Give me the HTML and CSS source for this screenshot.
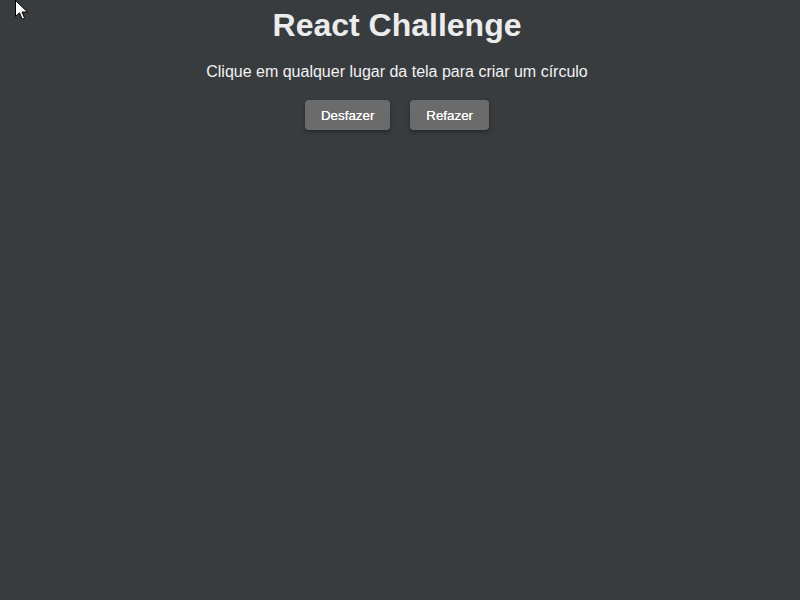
FILE: index.html
```html
<!DOCTYPE html>
<html lang="pt-BR">
<head>
<meta charset="utf-8">
<title>React Challenge</title>
<link rel="stylesheet" href="styles.css">
</head>
<body>
<main class="app">
  <h1 class="title">React Challenge</h1>
  <p class="subtitle">Clique em qualquer lugar da tela para criar um círculo</p>
  <div class="actions">
    <button class="btn" type="button">Desfazer</button>
    <button class="btn" type="button">Refazer</button>
  </div>
</main>
<svg class="cursor" width="14" height="22" viewBox="0 0 14 22" aria-hidden="true">
  <path d="M0.5 0.5 L0.5 16.5 L4.5 12.8 L7.2 19.2 L9.6 18.2 L7 12 L12.5 12 Z" fill="#ffffff" stroke="#000000" stroke-width="1" stroke-linejoin="miter"/>
</svg>
</body>
</html>
```

FILE: styles.css
```css
html, body {
  margin: 0;
  padding: 0;
  height: 100%;
}

body {
  background: #393c3f;
  color: #ececec;
  font-family: "Liberation Sans", Arial, sans-serif;
  overflow: hidden;
}

.app {
  display: flex;
  flex-direction: column;
  align-items: center;
  padding: 7px 6px 0 0;
}

.title {
  margin: 0;
  font-size: 32px;
  font-weight: bold;
  line-height: 37px;
  color: #ececec;
}

.subtitle {
  margin: 18px 0 0;
  font-size: 16px;
  line-height: 19px;
  color: #f2f2f2;
}

.actions {
  display: flex;
  gap: 20px;
  margin-top: 19px;
}

.btn {
  height: 30px;
  padding: 0 16px;
  border: none;
  border-radius: 4px;
  background: #6b6b6b;
  color: #ffffff;
  font-family: "Liberation Sans", Arial, sans-serif;
  font-size: 13.33px;
  font-weight: normal;
  text-shadow: 0 0 0.4px #ffffff;
  box-shadow: 0 2px 4px rgba(0, 0, 0, 0.35);
  cursor: pointer;
}

.cursor {
  position: absolute;
  left: 15px;
  top: 0;
}
```
